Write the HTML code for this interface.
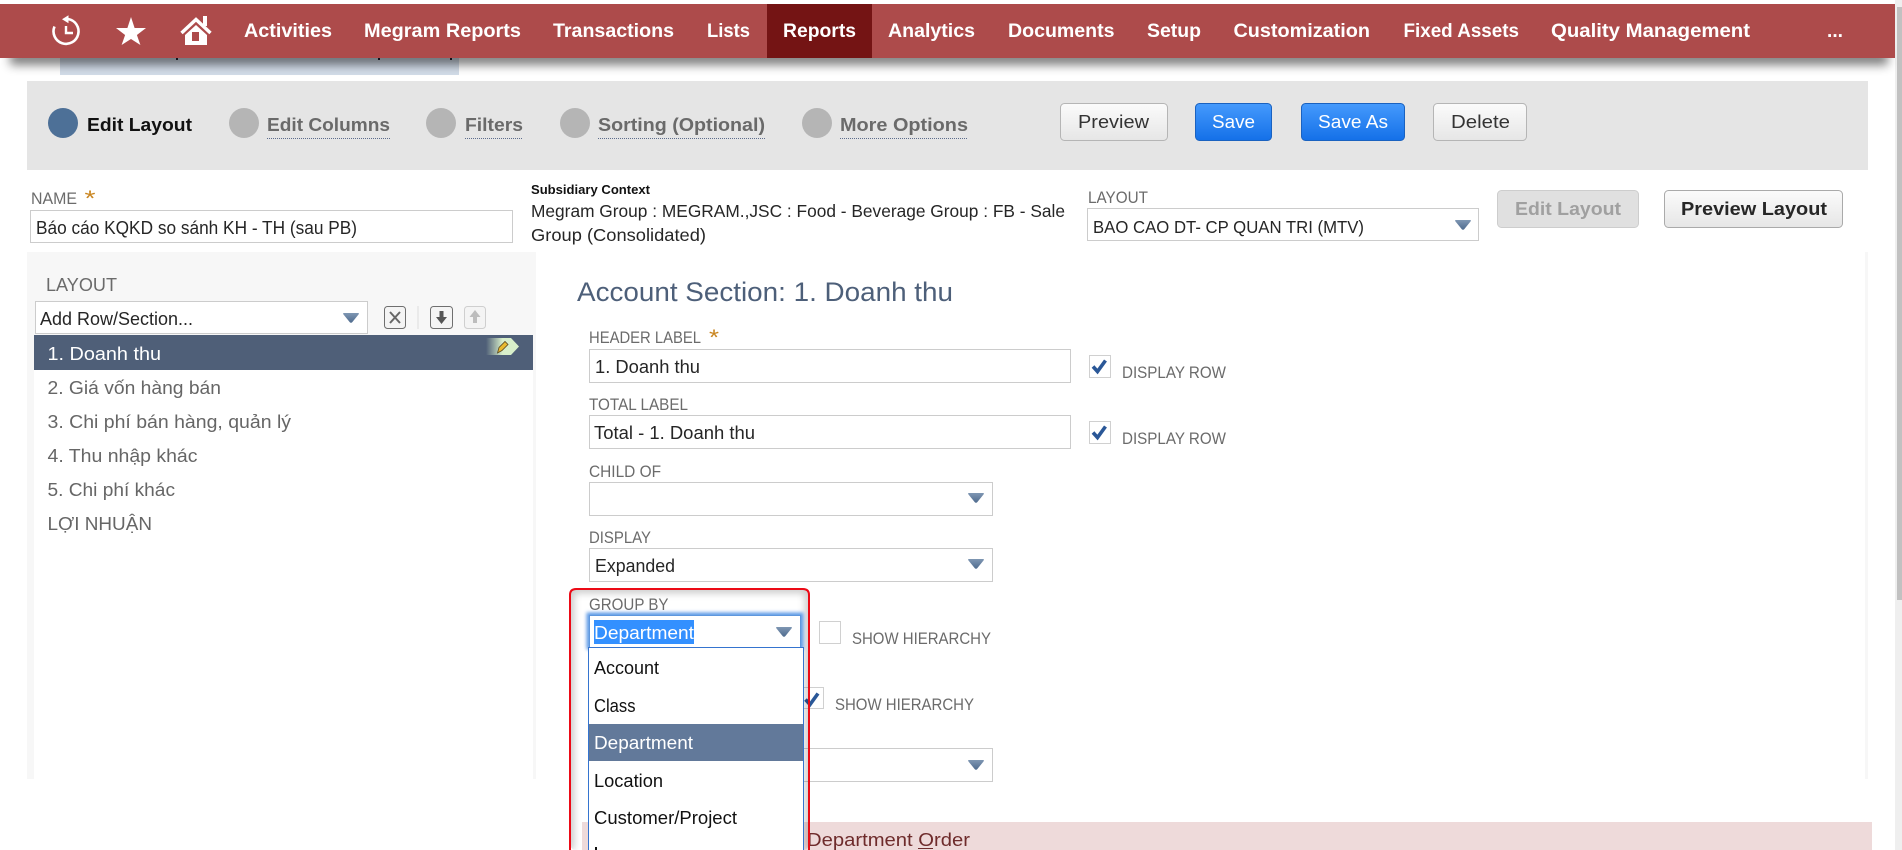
<!DOCTYPE html>
<html lang="vi">
<head>
<meta charset="utf-8">
<title>Edit Layout</title>
<style>
html,body{margin:0;padding:0;background:#fff;width:1902px;height:850px;overflow:hidden}
svg{display:block;position:absolute;left:0;top:0}
text{font-family:"Liberation Sans",Arial,sans-serif;white-space:pre}
.nav{font-size:19.2px;font-weight:700;fill:#fff}
.step{font-size:18.8px;font-weight:700;fill:#6a6a6a}
.lbl{font-size:17px;fill:#6b6b6b}
.val{font-size:18.5px;fill:#262626}
.btn{font-size:18.5px;fill:#333}
.row{font-size:18.5px;fill:#666}
.opt{font-size:18.5px;fill:#111}
</style>
</head>
<body>
<svg width="1902" height="850" viewBox="0 0 1902 850" xmlns="http://www.w3.org/2000/svg">
<defs>
<filter id="b5" x="-5%" y="-100%" width="110%" height="300%"><feGaussianBlur stdDeviation="5"/></filter>
<filter id="b2" x="-10%" y="-30%" width="120%" height="160%"><feGaussianBlur stdDeviation="1.8"/></filter>
<filter id="b4" x="-20%" y="-20%" width="140%" height="140%"><feGaussianBlur stdDeviation="4"/></filter>
<linearGradient id="gb" x1="0" y1="0" x2="0" y2="1"><stop offset="0" stop-color="#fbfbfb"/><stop offset="1" stop-color="#e6e6e6"/></linearGradient>
<linearGradient id="bb" x1="0" y1="0" x2="0" y2="1"><stop offset="0" stop-color="#459afd"/><stop offset="1" stop-color="#1470e8"/></linearGradient>
<linearGradient id="tag" x1="0" y1="0" x2="1" y2="0"><stop offset="0" stop-color="#d8efca" stop-opacity="0"/><stop offset=".5" stop-color="#d8efca"/><stop offset="1" stop-color="#d8efca"/></linearGradient>
<linearGradient id="arw" x1="0" y1="0" x2="0" y2="1"><stop offset="0" stop-color="#7f97b3"/><stop offset="1" stop-color="#4f6b8e"/></linearGradient>
<path id="sel" d="M1 0H15Q16.5 0 15.6 1.4L9.2 9.3Q8 10.4 6.8 9.3L.4 1.4Q-.5 0 1 0Z" fill="url(#arw)"/>
<path id="chk" d="M0 7L4.5 12L12.5 1" fill="none" stroke="#2a5797" stroke-width="3.6"/>
<clipPath id="redclip"><rect x="570" y="589" width="239" height="261" rx="6"/></clipPath>
</defs>

<!-- scrollbar -->
<rect x="1895" y="0" width="7" height="850" fill="#efefef"/>
<rect x="1897" y="7" width="5" height="593" fill="#c1c1c1"/>

<!-- strip under nav -->
<rect x="60" y="50" width="399" height="25" fill="#d3dde9"/>
<rect x="176" y="58" width="2" height="2" fill="#223"/><rect x="378" y="58" width="2" height="2" fill="#223"/><rect x="450" y="58" width="2" height="2" fill="#223"/>

<!-- nav shadow -->
<rect x="10" y="50" width="1878" height="15" fill="#000" opacity=".5" filter="url(#b5)"/>

<!-- nav -->
<rect x="0" y="4" width="1895" height="54" fill="#ad4b4b"/>
<rect x="767" y="4" width="105" height="54" fill="#741414"/>
<path d="M68 19A12.5 12.5 0 1 1 54.5 26.5" fill="none" stroke="#fff" stroke-width="2.6"/>
<path d="M62 19.2L68.5 15.2V23.2Z" fill="#fff"/>
<path d="M66 26V33H73" fill="none" stroke="#fff" stroke-width="2.4"/>
<path d="M131 17L134.6 28H146L136.9 35L140.4 45L131 39L121.6 45L125.1 35L116 28H127.4Z" fill="#fff"/>
<path d="M181.5 33L196 19.5L210.500 33" fill="none" stroke="#fff" stroke-width="3.4"/>
<rect x="203" y="16" width="4" height="10" fill="#fff"/>
<path fill-rule="evenodd" d="M196 25L207 35V45H185V35ZM192 32V41H199V32Z" fill="#fff"/>
<text class="nav" x="244" y="37" textLength="88" lengthAdjust="spacingAndGlyphs">Activities</text>
<text class="nav" x="364" y="37" textLength="157" lengthAdjust="spacingAndGlyphs">Megram Reports</text>
<text class="nav" x="553" y="37" textLength="121" lengthAdjust="spacingAndGlyphs">Transactions</text>
<text class="nav" x="707" y="37" textLength="43" lengthAdjust="spacingAndGlyphs">Lists</text>
<text class="nav" x="783" y="37" textLength="73" lengthAdjust="spacingAndGlyphs">Reports</text>
<text class="nav" x="888" y="37" textLength="87" lengthAdjust="spacingAndGlyphs">Analytics</text>
<text class="nav" x="1008" y="37" textLength="106.500" lengthAdjust="spacingAndGlyphs">Documents</text>
<text class="nav" x="1147" y="37" textLength="54" lengthAdjust="spacingAndGlyphs">Setup</text>
<text class="nav" x="1233.500" y="37" textLength="136.500" lengthAdjust="spacingAndGlyphs">Customization</text>
<text class="nav" x="1403.500" y="37" textLength="115.500" lengthAdjust="spacingAndGlyphs">Fixed Assets</text>
<text class="nav" x="1551" y="37" textLength="199" lengthAdjust="spacingAndGlyphs">Quality Management</text>
<text class="nav" x="1827" y="37" textLength="16" lengthAdjust="spacingAndGlyphs">...</text>

<!-- step bar -->
<rect x="27" y="81" width="1841" height="89" fill="#e5e5e5"/>
<circle cx="63" cy="123" r="15" fill="#4d7097"/>
<circle cx="244" cy="123" r="15" fill="#b5b5b5"/>
<circle cx="441" cy="123" r="15" fill="#b5b5b5"/>
<circle cx="575" cy="123" r="15" fill="#b5b5b5"/>
<circle cx="817" cy="123" r="15" fill="#b5b5b5"/>
<text class="step" style="fill:#111" x="87" y="131" textLength="105" lengthAdjust="spacingAndGlyphs">Edit Layout</text>
<text class="step" x="267" y="131" textLength="123" lengthAdjust="spacingAndGlyphs">Edit Columns</text>
<text class="step" x="465" y="131" textLength="58" lengthAdjust="spacingAndGlyphs">Filters</text>
<text class="step" x="598" y="131" textLength="167" lengthAdjust="spacingAndGlyphs">Sorting (Optional)</text>
<text class="step" x="840" y="131" textLength="128" lengthAdjust="spacingAndGlyphs">More Options</text>
<g stroke="#5c6c8c" stroke-width="1" stroke-dasharray="1 1">
<path d="M267 138.500H390M465 138.500H523M598 138.500H765M840 138.500H968"/>
</g>

<!-- buttons -->
<rect x="1060.500" y="103.500" width="107" height="37" rx="4" fill="url(#gb)" stroke="#b5b5b5"/>
<text class="btn" x="1078" y="128" textLength="71" lengthAdjust="spacingAndGlyphs">Preview</text>
<rect x="1195.500" y="103.500" width="76" height="37" rx="4" fill="url(#bb)" stroke="#1a62c0"/>
<text class="btn" style="fill:#fff" x="1212" y="128" textLength="43" lengthAdjust="spacingAndGlyphs">Save</text>
<rect x="1301.500" y="103.500" width="103" height="37" rx="4" fill="url(#bb)" stroke="#1a62c0"/>
<text class="btn" style="fill:#fff" x="1318" y="128" textLength="70" lengthAdjust="spacingAndGlyphs">Save As</text>
<rect x="1433.500" y="103.500" width="93" height="37" rx="4" fill="url(#gb)" stroke="#b5b5b5"/>
<text class="btn" x="1451" y="128" textLength="59" lengthAdjust="spacingAndGlyphs">Delete</text>

<!-- name row -->
<text class="lbl" x="31" y="204" textLength="46" lengthAdjust="spacingAndGlyphs">NAME</text>
<text x="84.500" y="206" style="font-size:22px;fill:#c9851f" textLength="11" lengthAdjust="spacingAndGlyphs">*</text>
<rect x="30.500" y="210.500" width="482" height="32" fill="#fff" stroke="#ccc"/>
<text class="val" x="36" y="234" textLength="321" lengthAdjust="spacingAndGlyphs">Báo cáo KQKD so sánh KH - TH (sau PB)</text>

<text x="531" y="194" style="font-size:12.500px;font-weight:700;fill:#111" textLength="119" lengthAdjust="spacingAndGlyphs">Subsidiary Context</text>
<text class="val" style="font-size:17.500px" x="531" y="217" textLength="534" lengthAdjust="spacingAndGlyphs">Megram Group : MEGRAM.,JSC : Food - Beverage Group : FB - Sale</text>
<text class="val" style="font-size:17.500px" x="531" y="241" textLength="175" lengthAdjust="spacingAndGlyphs">Group (Consolidated)</text>

<text class="lbl" x="1088" y="203" textLength="60" lengthAdjust="spacingAndGlyphs">LAYOUT</text>
<rect x="1087.500" y="208.500" width="391" height="32" fill="#fff" stroke="#ccc"/>
<text class="val" style="font-size:17.500px" x="1093" y="233" textLength="271" lengthAdjust="spacingAndGlyphs">BAO CAO DT- CP QUAN TRI (MTV)</text>
<use href="#sel" x="1455" y="220"/>
<rect x="1497.500" y="190.500" width="141" height="37" rx="4" fill="#e0e0e0" stroke="#cdcdcd"/>
<text class="btn" style="font-weight:700;fill:#a0a0a0" x="1515" y="215" textLength="106" lengthAdjust="spacingAndGlyphs">Edit Layout</text>
<rect x="1664.500" y="190.500" width="178" height="37" rx="4" fill="url(#gb)" stroke="#aaa"/>
<text class="btn" style="font-weight:700;fill:#262626" x="1681" y="215" textLength="146" lengthAdjust="spacingAndGlyphs">Preview Layout</text>

<!-- left panel -->
<rect x="27" y="252" width="509" height="527" fill="#f7f7f7"/>
<rect x="34" y="335" width="499" height="444" fill="#fff"/>
<rect x="1865" y="252" width="3" height="527" fill="#f7f7f7"/>
<text class="lbl" style="font-size:18.500px" x="46" y="291" textLength="71" lengthAdjust="spacingAndGlyphs">LAYOUT</text>
<rect x="35.500" y="301.500" width="332" height="32" fill="#fff" stroke="#ccc"/>
<text class="val" x="40" y="325" textLength="153" lengthAdjust="spacingAndGlyphs">Add Row/Section...</text>
<use href="#sel" x="343" y="313"/>
<rect x="384.500" y="306.500" width="21" height="22" rx="3" fill="#f4f4f4" stroke="#6f6f6f"/>
<path d="M390 312L400 323M400 312L390 323" stroke="#666" stroke-width="2"/>
<path d="M418 306V329" stroke="#ddd"/>
<rect x="430.500" y="306.500" width="22" height="22" rx="3" fill="#f4f4f4" stroke="#6f6f6f"/>
<path d="M439.500 311H443.500V317H447L441.500 324L436 317H439.500Z" fill="#555"/>
<rect x="464.500" y="306.500" width="21" height="22" rx="3" fill="#f4f4f4" stroke="#cfcfcf"/>
<path d="M473 323H477V317H480.500L475 310L469.500 317H473Z" fill="#bdbdbd"/>

<rect x="34" y="335" width="499" height="35" fill="#4f5f78"/>
<path d="M486 338H511L519 346.500L511 355H486Z" fill="url(#tag)"/>
<path d="M497.500 353L499 347.500L505 341.500L508 344.500L502 350.500Z" fill="#e8b92e" stroke="#5b4a20" stroke-width=".8"/>
<text class="row" style="fill:#fff" x="47.500" y="360" textLength="113.500" lengthAdjust="spacingAndGlyphs">1. Doanh thu</text>
<text class="row" x="47.500" y="394" textLength="173.500" lengthAdjust="spacingAndGlyphs">2. Giá vốn hàng bán</text>
<text class="row" x="47.500" y="428" textLength="243.500" lengthAdjust="spacingAndGlyphs">3. Chi phí bán hàng, quản lý</text>
<text class="row" x="47.500" y="462" textLength="150" lengthAdjust="spacingAndGlyphs">4. Thu nhập khác</text>
<text class="row" x="47.500" y="496" textLength="127.500" lengthAdjust="spacingAndGlyphs">5. Chi phí khác</text>
<text class="row" x="47.500" y="530" textLength="104.500" lengthAdjust="spacingAndGlyphs">LỢI NHUẬN</text>

<!-- form -->
<text x="577" y="301" style="font-size:27px;fill:#4d5f79" textLength="376" lengthAdjust="spacingAndGlyphs">Account Section: 1. Doanh thu</text>

<text class="lbl" x="589" y="343" textLength="112" lengthAdjust="spacingAndGlyphs">HEADER LABEL</text>
<text x="709" y="345" style="font-size:22px;fill:#c9851f" textLength="10" lengthAdjust="spacingAndGlyphs">*</text>
<rect x="589.500" y="349.500" width="481" height="33" fill="#fff" stroke="#ccc"/>
<text class="val" x="595" y="373" textLength="105" lengthAdjust="spacingAndGlyphs">1. Doanh thu</text>
<rect x="1089.500" y="355.500" width="21" height="22" fill="#fff" stroke="#d0d0d0"/>
<use href="#chk" x="1093" y="359.500"/>
<text class="lbl" x="1122" y="378" textLength="104" lengthAdjust="spacingAndGlyphs">DISPLAY ROW</text>

<text class="lbl" x="589" y="410" textLength="99" lengthAdjust="spacingAndGlyphs">TOTAL LABEL</text>
<rect x="589.500" y="415.500" width="481" height="33" fill="#fff" stroke="#ccc"/>
<text class="val" x="594" y="439" textLength="161" lengthAdjust="spacingAndGlyphs">Total - 1. Doanh thu</text>
<rect x="1089.500" y="421.500" width="21" height="22" fill="#fff" stroke="#d0d0d0"/>
<use href="#chk" x="1093" y="425.500"/>
<text class="lbl" x="1122" y="444" textLength="104" lengthAdjust="spacingAndGlyphs">DISPLAY ROW</text>

<text class="lbl" x="589" y="477" textLength="72" lengthAdjust="spacingAndGlyphs">CHILD OF</text>
<rect x="589.500" y="482.500" width="403" height="33" fill="#fff" stroke="#ccc"/>
<use href="#sel" x="968" y="493"/>

<text class="lbl" x="589" y="543" textLength="62" lengthAdjust="spacingAndGlyphs">DISPLAY</text>
<rect x="589.500" y="548.500" width="403" height="33" fill="#fff" stroke="#ccc"/>
<text class="val" x="595" y="572" textLength="80" lengthAdjust="spacingAndGlyphs">Expanded</text>
<use href="#sel" x="968" y="559"/>

<!-- show hierarchy -->
<rect x="819.500" y="621.500" width="21" height="22" fill="#fff" stroke="#d0d0d0"/>
<text class="lbl" x="852" y="644" textLength="139" lengthAdjust="spacingAndGlyphs">SHOW HIERARCHY</text>
<rect x="802.500" y="687.500" width="21" height="21" fill="#fff" stroke="#d0d0d0"/>
<use href="#chk" x="805.500" y="692.500"/>
<text class="lbl" x="835" y="710" textLength="139" lengthAdjust="spacingAndGlyphs">SHOW HIERARCHY</text>
<rect x="700.500" y="748.500" width="292" height="33" fill="#fff" stroke="#ccc"/>
<use href="#sel" x="968" y="760"/>

<!-- pink bar -->
<rect x="582" y="822" width="1290" height="28" fill="#eedada"/>
<text x="807" y="846" style="font-size:18px;fill:#6e2b2b" textLength="163" lengthAdjust="spacingAndGlyphs">Department Order</text>
<path d="M918 848.500H933" stroke="#6e2b2b" stroke-width="1"/>

<!-- group by -->
<g clip-path="url(#redclip)">
<path d="M570 850V595Q570 589 576 589H803Q809 589 809 595V850" fill="none" stroke="#000" stroke-opacity=".25" stroke-width="7" filter="url(#b4)"/>
</g>
<text class="lbl" x="589" y="610" textLength="79.500" lengthAdjust="spacingAndGlyphs">GROUP BY</text>
<rect x="586.500" y="612.500" width="217" height="37" fill="#5d9ae6" filter="url(#b2)"/>
<rect x="589.500" y="615.500" width="211" height="32" fill="#fff" stroke="#5f97dd"/>
<rect x="594" y="620" width="100" height="24" fill="#3390ff"/>
<text class="val" style="fill:#fff" x="594" y="639" textLength="100" lengthAdjust="spacingAndGlyphs">Department</text>
<use href="#sel" x="776" y="627"/>

<!-- dropdown -->
<path d="M588.500 850V647.500H803.500V850Z" fill="#fff" stroke="none"/>
<path d="M588.500 850V647.500H803.500V850" fill="none" stroke="#3574cf"/>
<rect x="589" y="724" width="214" height="37" fill="#62799a"/>
<text class="opt" x="594" y="674" textLength="65" lengthAdjust="spacingAndGlyphs">Account</text>
<text class="opt" x="594" y="712" textLength="41.500" lengthAdjust="spacingAndGlyphs">Class</text>
<text class="opt" style="fill:#fff" x="594" y="749" textLength="99" lengthAdjust="spacingAndGlyphs">Department</text>
<text class="opt" x="594" y="787" textLength="69" lengthAdjust="spacingAndGlyphs">Location</text>
<text class="opt" x="594" y="824" textLength="143" lengthAdjust="spacingAndGlyphs">Customer/Project</text>
<rect x="595" y="847" width="2" height="3" fill="#111"/>

<!-- red highlight -->
<path d="M570 850V595Q570 589 576 589H803Q809 589 809 595V850" fill="none" stroke="#ec0a16" stroke-width="2"/>
</svg>
</body>
</html>
